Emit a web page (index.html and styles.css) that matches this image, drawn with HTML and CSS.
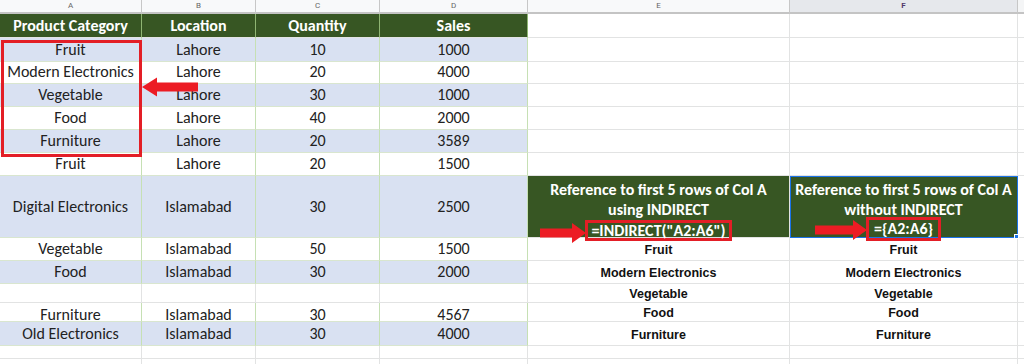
FILE: index.html
```html
<!DOCTYPE html>
<html>
<head>
<meta charset="utf-8">
<link rel="stylesheet" href="styles.css">
</head>
<body>
<div class="sheet">
  <div class="ch">A</div><div class="ch">B</div><div class="ch">C</div><div class="ch">D</div><div class="ch">E</div><div class="ch sel">F</div><div class="ch stub"></div>

  <div class="c th">Product Category</div><div class="c th">Location</div><div class="c th">Quantity</div><div class="c th">Sales</div><div class="c"></div><div class="c"></div><div class="c stub"></div>

  <div class="c t b">Fruit</div><div class="c t b">Lahore</div><div class="c t b">10</div><div class="c t b">1000</div><div class="c"></div><div class="c"></div><div class="c stub"></div>
  <div class="c t">Modern Electronics</div><div class="c t">Lahore</div><div class="c t">20</div><div class="c t">4000</div><div class="c"></div><div class="c"></div><div class="c stub"></div>
  <div class="c t b">Vegetable</div><div class="c t b">Lahore</div><div class="c t b">30</div><div class="c t b">1000</div><div class="c"></div><div class="c"></div><div class="c stub"></div>
  <div class="c t">Food</div><div class="c t">Lahore</div><div class="c t">40</div><div class="c t">2000</div><div class="c"></div><div class="c"></div><div class="c stub"></div>
  <div class="c t b">Furniture</div><div class="c t b">Lahore</div><div class="c t b">20</div><div class="c t b">3589</div><div class="c"></div><div class="c"></div><div class="c stub"></div>
  <div class="c t">Fruit</div><div class="c t">Lahore</div><div class="c t">20</div><div class="c t">1500</div><div class="c"></div><div class="c"></div><div class="c stub"></div>

  <div class="c t b mid">Digital Electronics</div><div class="c t b mid">Islamabad</div><div class="c t b mid">30</div><div class="c t b mid">2500</div>
  <div class="c gh">Reference to first 5 rows of Col A<br>using INDIRECT<br><span class="fx">=INDIRECT("A2:A6")<svg class="rarrow" width="46" height="20" viewBox="0 0 46 20"><polygon points="0,5.5 32,5.5 32,0 46,10 32,20 32,14.5 0,14.5" fill="#ec1c24"/></svg></span></div>
  <div class="c gh selcell">Reference to first 5 rows of Col A<br>without INDIRECT<br><span class="fx tall">={A2:A6}<svg class="rarrow" width="52" height="20" viewBox="0 0 52 20"><polygon points="0,5.5 38,5.5 38,0 52,10 38,20 38,14.5 0,14.5" fill="#ec1c24"/></svg></span><i class="handle"></i></div>
  <div class="c stub"></div>

  <div class="c t">Vegetable</div><div class="c t">Islamabad</div><div class="c t">50</div><div class="c t">1500</div><div class="c r">Fruit</div><div class="c r">Fruit</div><div class="c stub"></div>
  <div class="c t b">Food</div><div class="c t b">Islamabad</div><div class="c t b">30</div><div class="c t b">2000</div><div class="c r">Modern Electronics</div><div class="c r">Modern Electronics</div><div class="c stub"></div>
  <div class="c"></div><div class="c"></div><div class="c"></div><div class="c"></div><div class="c r">Vegetable</div><div class="c r">Vegetable</div><div class="c stub"></div>
  <div class="c t low">Furniture</div><div class="c t low">Islamabad</div><div class="c t low">30</div><div class="c t low">4567</div><div class="c r">Food</div><div class="c r">Food</div><div class="c stub"></div>
  <div class="c t b">Old Electronics</div><div class="c t b">Islamabad</div><div class="c t b">30</div><div class="c t b">4000</div><div class="c r">Furniture</div><div class="c r">Furniture</div><div class="c stub"></div>
  <div class="c"></div><div class="c"></div><div class="c"></div><div class="c"></div><div class="c"></div><div class="c"></div><div class="c stub"></div>
  <div class="c"></div><div class="c"></div><div class="c"></div><div class="c"></div><div class="c"></div><div class="c"></div><div class="c stub"></div>

  <div class="hilite"></div>
  <svg class="larrow" width="56" height="20" viewBox="0 0 56 20"><polygon points="0,10 15,0.5 15,5.5 56,5.5 56,14.5 15,14.5 15,19.5" fill="#ec1c24"/></svg>
</div>
</body>
</html>
```

FILE: styles.css
```css
* { box-sizing: border-box; }
html, body { margin: 0; padding: 0; background: #fff; }
body { width: 1024px; height: 364px; overflow: hidden; }

.sheet {
  position: relative;
  display: grid;
  grid-template-columns: 142px 114px 124px 148px 262px 228px 6px;
  grid-template-rows: 14px 24px 24px 22px 23px 23px 23px 23px 62px 23px 23px 19px 19px 24px 13px 20px;
  font-family: Calibri, Carlito, Lato, "Open Sans", sans-serif;
  font-size: 16px;
  color: #222;
}

.ch {
  background: #f8f9fa;
  border-right: 1px solid #c7c7c7;
  border-bottom: 2px solid #c4c4c4;
  font-family: Roboto, "Liberation Sans", sans-serif;
  font-size: 8px;
  line-height: 11px;
  color: #666;
  text-align: center;
}
.ch.sel { background: #e6e8ec; color: #533b6b; font-weight: bold; }
.ch.stub { background: #f4f5f6; border-right: 0; }

.c {
  display: flex;
  align-items: center;
  justify-content: center;
  border-right: 1px solid #e2e3e3;
  border-bottom: 1px solid #e2e3e3;
  white-space: nowrap;
  overflow: visible;
  line-height: 20px;
}
.c.stub { border-right: 0; }

.th {
  background: #375623;
  color: #fff;
  font-weight: bold;
  border-right-color: #8fb573;
  border-bottom-color: #e2e3e3;
  align-items: flex-end;
  padding-bottom: 1px;
}
.t {
  border-right-color: #c6e0b4;
  border-bottom-color: #d9e6cf;
  align-items: flex-end;
  padding-bottom: 1px;
}
.t.mid { align-items: center; padding-bottom: 0; }
.b { background: #d9e1f2; }
.t.low { align-items: flex-end; line-height: 13px; padding-bottom: 0; }

.gh {
  position: relative;
  background: #375623;
  color: #fff;
  font-weight: bold;
  text-align: center;
  line-height: 19.5px;
  padding-top: 4px;
  display: block;
}
.fx {
  position: relative;
  display: inline-block;
  border: 3px solid #e31e26;
  line-height: 15px;
  padding: 0 3px;
  vertical-align: top;
  margin-top: 1px;
}
.fx.tall { padding: 1px 5px 2px; margin-top: -2px; }
.rarrow { position: absolute; right: calc(100% + 2px); top: 0; }

.selcell { outline: 1px solid #1a73e8; outline-offset: -1px; }
.handle {
  position: absolute;
  right: -2px;
  bottom: -2px;
  width: 5px;
  height: 5px;
  background: #1a73e8;
  border: 1px solid #fff;
}

.r {
  font-family: "Liberation Sans", Arial, sans-serif;
  font-weight: bold;
  font-size: 12.5px;
  color: #111;
  padding-top: 2px;
}

.hilite {
  position: absolute;
  left: 1px;
  top: 40px;
  width: 141px;
  height: 117px;
  border: 3px solid #e31e26;
  pointer-events: none;
}
.larrow { position: absolute; left: 142px; top: 77px; }
```
